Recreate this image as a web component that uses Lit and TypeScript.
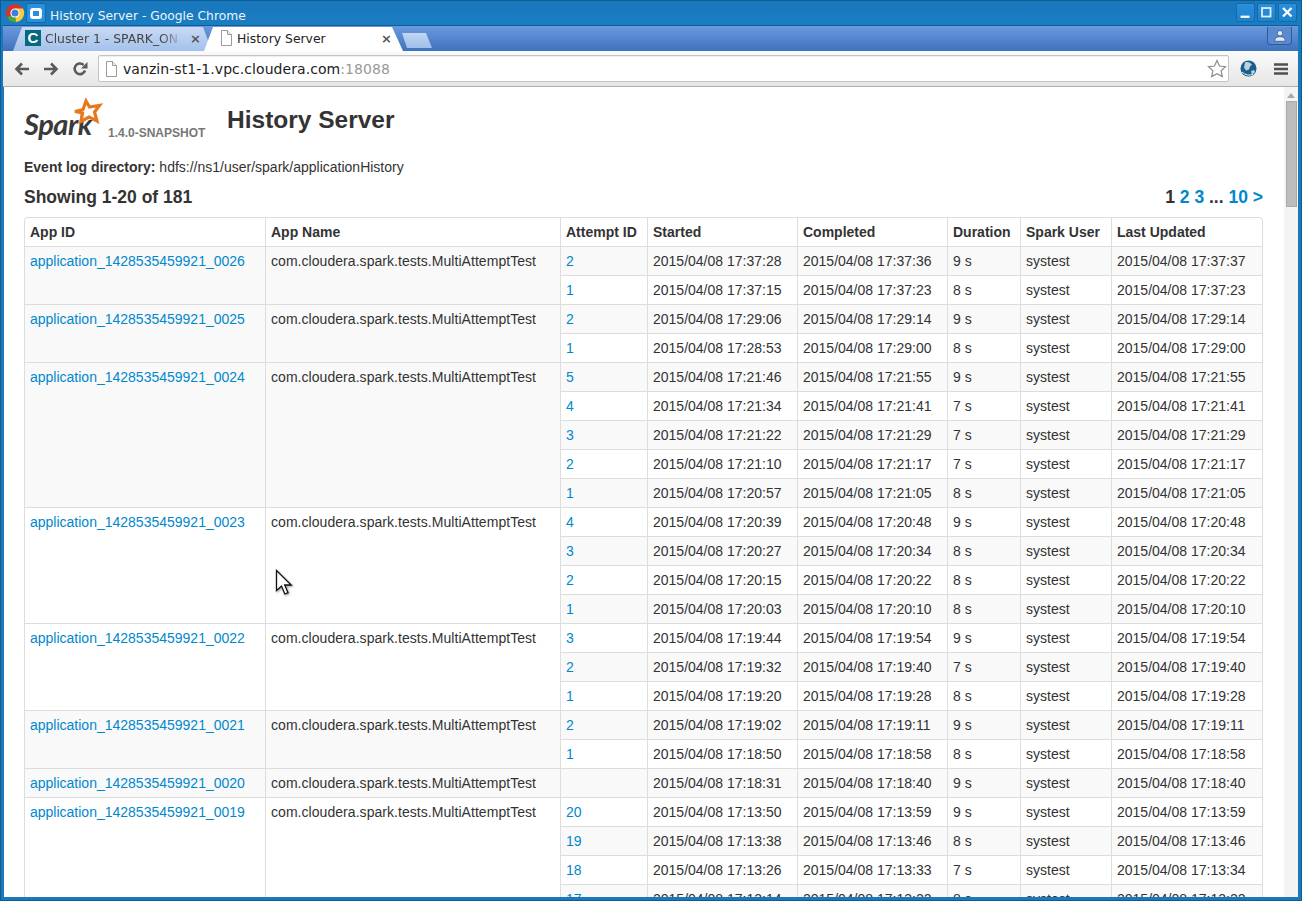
import { LitElement, html, css, svg } from "lit";
import { customElement } from "lit/decorators.js";

type Attempt = [string, string, string, string, string];
type App = { id: string; attempts: Attempt[] };
const D = "2015/04/08 ";
const a = (n: string, s: string, c: string, d: string, u?: string): Attempt => [n, D + s, D + c, d, D + (u ?? c)];
const apps: App[] = [
  { id: "0026", attempts: [a("2", "17:37:28", "17:37:36", "9 s", "17:37:37"), a("1", "17:37:15", "17:37:23", "8 s")] },
  { id: "0025", attempts: [a("2", "17:29:06", "17:29:14", "9 s"), a("1", "17:28:53", "17:29:00", "8 s")] },
  { id: "0024", attempts: [a("5", "17:21:46", "17:21:55", "9 s"), a("4", "17:21:34", "17:21:41", "7 s"), a("3", "17:21:22", "17:21:29", "7 s"), a("2", "17:21:10", "17:21:17", "7 s"), a("1", "17:20:57", "17:21:05", "8 s")] },
  { id: "0023", attempts: [a("4", "17:20:39", "17:20:48", "9 s"), a("3", "17:20:27", "17:20:34", "8 s"), a("2", "17:20:15", "17:20:22", "8 s"), a("1", "17:20:03", "17:20:10", "8 s")] },
  { id: "0022", attempts: [a("3", "17:19:44", "17:19:54", "9 s"), a("2", "17:19:32", "17:19:40", "7 s"), a("1", "17:19:20", "17:19:28", "8 s")] },
  { id: "0021", attempts: [a("2", "17:19:02", "17:19:11", "9 s"), a("1", "17:18:50", "17:18:58", "8 s")] },
  { id: "0020", attempts: [a("", "17:18:31", "17:18:40", "9 s")] },
  { id: "0019", attempts: [a("20", "17:13:50", "17:13:59", "9 s"), a("19", "17:13:38", "17:13:46", "8 s"), a("18", "17:13:26", "17:13:33", "7 s", "17:13:34"), a("17", "17:13:14", "17:13:22", "8 s")] },
];
const widths = [241, 295, 87, 150, 150, 73, 91, 151];
const heads = ["App ID", "App Name", "Attempt ID", "Started", "Completed", "Duration", "Spark User", "Last Updated"];

const pageIcon = svg`<svg class="doc" width="14" height="16" viewBox="0 0 14 16"><path d="M2.5.5h6l4 4v11h-10z" fill="#fff" stroke="#9a9a9a"/><path d="M8.5.5v4h4" fill="#eee" stroke="#9a9a9a"/></svg>`;

@customElement("app-root")
export class AppRoot extends LitElement {
  static styles = css`
    :host { display: block; width: 1302px; height: 901px; overflow: hidden; position: relative; background: #1a76b8; font-family: "Liberation Sans", Arial, sans-serif; }
    * { box-sizing: border-box; }
    .window { display: flex; flex-direction: column; height: 901px; border: solid #1a78bb; border-width: 0 4px 4px 3px; outline: 1px solid #0e5c94; outline-offset: -1px; }
    .titlebar { height: 25px; margin: 0 -4px 0 -3px; padding: 3px 5px 0 5px; display: flex; align-items: flex-start; background: linear-gradient(#1977bc, #1a7dc2); color: #fff; font: 12.3px "DejaVu Sans", sans-serif; }
    .titlebar .logo { display: block; }
    .appicon { width: 20px; height: 20px; margin: 0 4px 0 1px; background: #2a8fdc; border: 1px solid #1469a6; border-radius: 2px; display: flex; align-items: center; justify-content: center; }
    .appicon i { display: block; width: 12px; height: 11px; border: 3px solid #fff; border-radius: 3px; background: #2a8fdc; }
    .ttl { line-height: 26px; flex: 1; color: #eaf4fb; }
    .wb { width: 19px; height: 19px; margin-left: 2px; background: linear-gradient(#2a90dc, #1e82cc); border: 1px solid #156aa8; border-radius: 2px; display: block; }
    .tabstrip { height: 26px; display: flex; align-items: flex-end; padding-left: 10px; background: linear-gradient(#6a99de, #3f72bd); border-top: 1px solid #0e5c94; position: relative; }
    .tab { height: 24px; padding-bottom: 2px; display: flex; align-items: center; font: 12.4px "DejaVu Sans", sans-serif; white-space: nowrap; }
    .tab.off { width: 199px; padding-left: 12px; padding-right: 12px; margin-right: -8px; background: linear-gradient(#c9daf3, #a3c1eb); color: #444; clip-path: polygon(9px 0, 190px 0, 199px 100%, 0 100%); }
    .tab.on { width: 199px; padding-left: 15px; padding-right: 12px; background: #fff; color: #222; clip-path: polygon(9px 0, 188px 0, 199px 100%, 0 100%); position: relative; z-index: 1; }
    .tab .lbl { flex: 1; min-width: 0; margin-left: 4px; }
    .off .lbl { -webkit-mask-image: linear-gradient(to right, #000 85%, transparent 100%); mask-image: linear-gradient(to right, #000 85%, transparent 100%); margin-right: 8px; }
    .x { font: bold 13px "DejaVu Sans", sans-serif; color: #555; width: 10px; }
    .cfav { width: 16px; height: 16px; background: #04687f; color: #fff; font: bold 15px/16px "Liberation Sans", sans-serif; text-align: center; flex: none; }
    .newtab { width: 30px; height: 15px; margin: 0 0 3px -1px; background: linear-gradient(#c0d6f3, #9fbee9); clip-path: polygon(0 0, 24px 0, 30px 100%, 5px 100%); }
    .spacer { flex: 1; }
    .profile { width: 25px; height: 18px; margin: 0 6px 6px 0; align-self: flex-end; border: 1px solid #2e5a9c; border-top: 0; border-radius: 0 0 4px 4px; background: #5c8ad0; display: flex; align-items: center; justify-content: center; }
    .toolbar { height: 36px; padding: 0 10px 0 11px; display: flex; align-items: center; background: linear-gradient(#fafafa, #e6e6e6); border-bottom: 1px solid #b0b0b0; }
    .nav { display: block; margin-right: 13px; flex: none; }
    .omni { width: 1133px; height: 27px; margin-left: -3px; padding: 0 1px 0 5px; display: flex; align-items: center; background: #fff; border: 1px solid #c4c4c4; border-radius: 2px; box-shadow: inset 0 1px 1px #eee; font: 14px "DejaVu Sans", sans-serif; color: #222; }
    .omni .url { margin-left: 5px; flex: 1; white-space: nowrap; letter-spacing: .06px; }
    .omni .port { color: #999; }
    .globe { margin-left: 11px; display: block; flex: none; }
    .menu { margin-left: 17px; display: block; flex: none; }
    .body { flex: 1; min-height: 0; display: flex; background: #fff; overflow: hidden; margin-left: 1px; }
    .page { flex: 1; min-width: 0; padding: 10px 21px 0 20px; color: #333; font-size: 14px; line-height: 20px; overflow: hidden; }
    .head { display: flex; align-items: flex-start; height: 50px; }
    .brand { width: 203px; height: 44px; display: flex; align-items: flex-end; flex: none; position: relative; }
    .wordmark { font: italic 700 29px/34px "Lato", sans-serif; letter-spacing: -.5px; color: #3a3a3a; width: 84px; }
    .star { position: absolute; left: 48px; top: 1px; }
    .ver { font-size: 12px; font-weight: bold; color: #777; line-height: 13px; margin-bottom: 1px; }
    h3 { margin: 0; font-size: 24.5px; font-weight: bold; line-height: 30px; padding-top: 8px; }
    .meta { margin: 10px 0 0; }
    .bar { display: flex; justify-content: space-between; margin-top: 10px; font-size: 17.5px; font-weight: bold; line-height: 20px; height: 30px; }
    a { color: #0088cc; text-decoration: none; }
    table { width: 1239px; table-layout: fixed; border-collapse: separate; border-spacing: 0; border: 1px solid #ddd; border-left: 0; border-radius: 4px; }
    th, td { padding: 4px 5px; text-align: left; vertical-align: top; border-left: 1px solid #ddd; white-space: nowrap; overflow: hidden; }
    th { font-weight: bold; height: 28px; }
    td { border-top: 1px solid #ddd; height: 29px; }
    th:first-child { border-top-left-radius: 4px; }
    tbody tr:nth-child(odd) td { background: #f9f9f9; }
    .name { letter-spacing: .05px; }
    .scroll { width: 14px; flex: none; background: #f4f4f4; display: flex; flex-direction: column; align-items: center; }
    .scroll i { display: block; width: 0; height: 0; margin-top: 6px; border: solid transparent; border-width: 0 4px 5px; border-bottom-color: #a8a8a8; }
    .thumb { width: 11px; height: 106px; margin-top: 3px; background: #bdbdbd; border: 1px solid #aaa; }
    .cursor { position: absolute; left: 275px; top: 569px; display: block; filter: drop-shadow(1px 1px 1px rgba(0,0,0,.4)); }
  `;

  private rows() {
    return apps.flatMap((app) =>
      app.attempts.map((r, i) => html`<tr>
        ${i === 0
          ? html`<td rowspan=${app.attempts.length}><a href="#">application_1428535459921_${app.id}</a></td>
                 <td class="name" rowspan=${app.attempts.length}>com.cloudera.spark.tests.MultiAttemptTest</td>`
          : ""}
        <td><a href="#">${r[0]}</a></td><td>${r[1]}</td><td>${r[2]}</td><td>${r[3]}</td><td>systest</td><td>${r[4]}</td>
      </tr>`)
    );
  }

  render() {
    return html`<div class="window">
      <div class="titlebar">
        <svg class="logo" width="20" height="20" viewBox="0 0 20 20">
          <circle cx="10" cy="10" r="9" fill="#d8322c"/>
          <path d="M10 10L2.2 14.5A9 9 0 0 0 12 18.8z" fill="#4aa342"/>
          <path d="M10 5.5h7.9A9 9 0 0 1 11 19z" fill="#f7cd3d"/>
          <circle cx="10" cy="10" r="4.6" fill="#fff"/><circle cx="10" cy="10" r="3.5" fill="#3f7fdc"/>
        </svg>
        <span class="appicon"><i></i></span>
        <span class="ttl">History Server - Google Chrome</span>
        <svg class="wb" viewBox="0 0 19 19"><rect x="4" y="13" width="10" height="2.5" fill="#fff"/></svg>
        <svg class="wb" viewBox="0 0 19 19"><rect x="4.500" y="4.500" width="9.500" height="9.500" fill="none" stroke="#dfeefa" stroke-width="2"/></svg>
        <svg class="wb" viewBox="0 0 19 19"><path d="M4.500 4.500l9.500 9.500M14 4.500L4.500 14" stroke="#fff" stroke-width="2.600"/></svg>
      </div>
      <div class="tabstrip">
        <div class="tab off"><span class="cfav">C</span><span class="lbl">Cluster 1 - SPARK_ON</span><span class="x">×</span></div>
        <div class="tab on">${pageIcon}<span class="lbl">History Server</span><span class="x">×</span></div>
        <div class="newtab"></div>
        <div class="spacer"></div>
        <div class="profile"><svg width="12" height="12" viewBox="0 0 12 12"><circle cx="6" cy="3.200" r="2.700" fill="#dfe9f8" stroke="#2e4f80" stroke-width=".7"/><path d="M.7 11.300c0-3.400 2-4.600 5.300-4.600s5.300 1.200 5.300 4.600z" fill="#dfe9f8" stroke="#2e4f80" stroke-width=".7"/></svg></div>
      </div>
      <div class="toolbar">
        <svg class="nav" width="16" height="14" viewBox="0 0 16 14"><path d="M15 7H3M8 1.500 2.500 7 8 12.500" fill="none" stroke="#5a5a5a" stroke-width="2.600"/></svg>
        <svg class="nav" width="16" height="14" viewBox="0 0 16 14"><path d="M1 7h12M8 1.500 13.500 7 8 12.500" fill="none" stroke="#5a5a5a" stroke-width="2.600"/></svg>
        <svg class="nav" width="16" height="16" viewBox="0 0 16 16"><path d="M13 9.500A5.300 5.300 0 1 1 11.600 4" fill="none" stroke="#5a5a5a" stroke-width="2.500"/><path d="M15.500 1v6.500H9z" fill="#5a5a5a"/></svg>
        <div class="omni">${pageIcon}<span class="url">vanzin-st1-1.vpc.cloudera.com<span class="port">:18088</span></span>
          <svg width="20" height="19" viewBox="0 0 20 19"><path d="M10 1.500l2.500 5.500 6 .7-4.400 4 1.200 5.900L10 14.700l-5.300 2.900 1.200-5.900-4.400-4 6-.7z" fill="#fff" stroke="#8c8c8c" stroke-width="1.200"/></svg>
        </div>
        <svg class="globe" width="17" height="17" viewBox="0 0 17 17"><circle cx="8.500" cy="8.500" r="8" fill="#1b5e8a"/><path d="M5 2.500c3-1 5 0 7 2l-2 2-1 3-3 1-2-3zM11 11l3-1 1 2-3 3z" fill="#b9d3e3"/><path d="M2 12c3 3 8 4 11 2" stroke="#dff" stroke-width="1" fill="none"/></svg>
        <svg class="menu" width="14" height="12" viewBox="0 0 14 12"><path d="M0 1.500h14M0 6h14M0 10.500h14" stroke="#505050" stroke-width="2.500"/></svg>
      </div>
      <div class="body">
        <div class="page">
          <div class="head">
            <div class="brand">
              <span class="wordmark">Spark</span>
              <svg class="star" width="31" height="27" viewBox="0 0 31 27"><path d="M14 3l3.500 6 10-1.500-5 6.500 2.500 9-8-4-8 4.500 1.500-8.500-7.500-1.500 8-2z" fill="#fff" stroke="#e8781c" stroke-width="3.200" stroke-linejoin="miter"/></svg>
              <span class="ver">1.4.0-SNAPSHOT</span>
            </div>
            <h3>History Server</h3>
          </div>
          <div class="meta"><b>Event log directory:</b> hdfs://ns1/user/spark/applicationHistory</div>
          <div class="bar"><span>Showing 1-20 of 181</span><span>1 <a href="#">2</a> <a href="#">3</a> ... <a href="#">10</a> <a href="#">&gt;</a></span></div>
          <table>
            <colgroup>${widths.map((w) => html`<col style="width:${w}px">`)}</colgroup>
            <thead><tr>${heads.map((h) => html`<th>${h}</th>`)}</tr></thead>
            <tbody>${this.rows()}</tbody>
          </table>
        </div>
        <div class="scroll"><i></i><div class="thumb"></div></div>
      </div>
    </div>
    <svg class="cursor" width="18" height="28" viewBox="0 0 18 28"><path d="M1.500 1.500v20l5-4.500 3.300 8 3.200-1.300-3.300-7.700h6.500z" fill="#fff" stroke="#111" stroke-width="1.300"/></svg>`;
  }
}
